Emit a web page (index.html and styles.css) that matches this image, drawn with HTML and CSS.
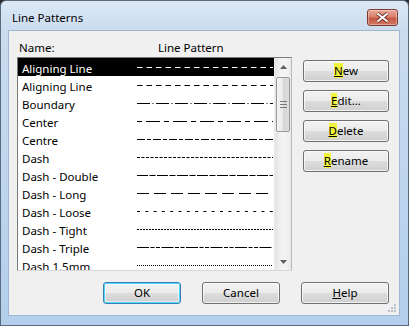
FILE: index.html
```html
<!DOCTYPE html>
<html lang="en">
<head>
  <meta charset="UTF-8">
  <title>Line Patterns</title>
  <link rel="stylesheet" href="styles.css">
</head>
<body>
  <div class="window">
    <!-- Title bar -->
    <div class="titlebar">
      <span class="title">Line Patterns</span>
      <button class="close" aria-label="Close">
        <svg width="13" height="11" viewBox="0 0 13 11">
          <path d="M1.5 1.5 L11.5 9.5 M11.5 1.5 L1.5 9.5" class="x-shadow"/>
          <path d="M1.5 1.5 L11.5 9.5 M11.5 1.5 L1.5 9.5" class="x-mark"/>
        </svg>
      </button>
    </div>

    <div class="client">
      <!-- Column headers -->
      <div class="labels">
        <span class="lbl-name">Name:</span>
        <span class="lbl-pattern">Line Pattern</span>
      </div>

      <div class="main">
        <!-- Pattern list -->
        <div class="listbox">
          <ul class="rows" id="rows"></ul>
          <div class="scrollbar">
            <div class="sb-btn">
              <svg width="7" height="4" viewBox="0 0 7 4"><path d="M0 4 L3.5 0 L7 4 Z"/></svg>
            </div>
            <div class="sb-track">
              <div class="sb-thumb"><span class="grip"></span></div>
            </div>
            <div class="sb-btn">
              <svg width="7" height="4" viewBox="0 0 7 4"><path d="M0 0 L7 0 L3.5 4 Z"/></svg>
            </div>
          </div>
        </div>

        <!-- Side buttons -->
        <div class="side">
          <button class="btn"><u class="key">N</u>ew</button>
          <button class="btn"><u class="key">E</u>dit...</button>
          <button class="btn"><u class="key">D</u>elete</button>
          <button class="btn"><u class="key">R</u>ename</button>
        </div>
      </div>

      <!-- Dialog buttons -->
      <div class="footer">
        <button class="btn btn-default">OK</button>
        <button class="btn">Cancel</button>
        <button class="btn btn-wide"><u>H</u>elp</button>
      </div>

      <svg class="size-grip" width="9" height="9" viewBox="0 0 9 9">
        <rect x="6" y="0" width="2" height="2"/>
        <rect x="3" y="3" width="2" height="2"/>
        <rect x="6" y="3" width="2" height="2"/>
        <rect x="0" y="6" width="2" height="2"/>
        <rect x="3" y="6" width="2" height="2"/>
        <rect x="6" y="6" width="2" height="2"/>
      </svg>
    </div>
  </div>

  <script>
    const patterns = [
      { name: 'Aligning Line', cls: 'p-align', selected: true },
      { name: 'Aligning Line', cls: 'p-align' },
      { name: 'Boundary', cls: 'p-boundary' },
      { name: 'Center', cls: 'p-center' },
      { name: 'Centre', cls: 'p-centre' },
      { name: 'Dash', cls: 'p-dash' },
      { name: 'Dash - Double', cls: 'p-double' },
      { name: 'Dash - Long', cls: 'p-long' },
      { name: 'Dash - Loose', cls: 'p-loose' },
      { name: 'Dash - Tight', cls: 'p-tight' },
      { name: 'Dash - Triple', cls: 'p-triple' },
      { name: 'Dash 1.5mm', cls: 'p-dot' }
    ];

    const rows = document.getElementById('rows');
    patterns.forEach(p => {
      rows.innerHTML += `
        <li class="row${p.selected ? ' selected' : ''}">
          <span class="name">${p.name}</span>
          <svg class="pat ${p.cls}" width="136" height="5"><line x1="0" y1="2.5" x2="136" y2="2.5"/></svg>
        </li>
      `;
    });
  </script>
</body>
</html>
```

FILE: styles.css
```css
* {
  box-sizing: border-box;
}

body {
  margin: 0;
  padding: 0;
  font-family: "Noto Sans", "Open Sans", sans-serif;
  font-size: 11.5px;
  color: #000;
  background: #2b2b2b;
}

.window {
  width: 409px;
  height: 326px;
  display: flex;
  flex-direction: column;
  border: 1px solid #5a6b80;
  border-radius: 6px 6px 0 0;
  padding: 0 8px 9px 7px;
  background: linear-gradient(to bottom, #dce7f4 0, #cadcef 30px, #b3cfec 100%);
}

.titlebar {
  height: 29px;
  display: flex;
  align-items: center;
  justify-content: space-between;
  padding-left: 4px;
}

.title {
  font-size: 11.5px;
  margin-top: 3px;
}

.close {
  width: 31px;
  height: 17px;
  margin-top: 4px;
  margin-right: 2px;
  padding: 0;
  border: 1px solid #7e3b32;
  border-radius: 3px;
  background: linear-gradient(to bottom, #e9a99b 0, #d9806c 45%, #c75843 55%, #cf7a63 100%);
  box-shadow: inset 0 0 0 1px rgba(255, 255, 255, 0.35);
  display: flex;
  align-items: center;
  justify-content: center;
}

.close .x-shadow {
  stroke: #6b2a20;
  stroke-width: 3.6;
  fill: none;
}

.close .x-mark {
  stroke: #fff;
  stroke-width: 2;
  fill: none;
}

.client {
  flex: 1;
  position: relative;
  background: #f0f0f0;
  border: 1px solid #9fb7d0;
}

/* Header labels */
.labels {
  height: 26px;
  padding-top: 9px;
  line-height: 15px;
  position: relative;
}

.lbl-name {
  position: absolute;
  left: 10px;
}

.lbl-pattern {
  position: absolute;
  left: 149px;
}

.main {
  display: flex;
  gap: 11px;
  padding-left: 8px;
}

/* List box */
.listbox {
  width: 275px;
  height: 214px;
  display: flex;
  border: 1px solid #7a7a7a;
  border-right-color: #b8b8b8;
  border-bottom-color: #d8d8d8;
  background: #fff;
  overflow: hidden;
}

.rows {
  list-style: none;
  margin: 0;
  padding: 0;
  width: 256px;
  overflow: hidden;
}

.row {
  height: 18px;
  display: flex;
  align-items: center;
}

.row .name {
  width: 119px;
  padding: 4px 0 0 4px;
  line-height: 14px;
  white-space: nowrap;
}

.row.selected {
  background: #000;
  color: #fff;
}

.pat {
  display: block;
}

.pat line {
  stroke: #000;
  stroke-width: 1;
}

.row.selected .pat line {
  stroke: #fff;
}

.p-align line { stroke-dasharray: 5.5 4; }
.p-boundary line { stroke-dasharray: 13 2.5 1 2.5; }
.p-center line { stroke-dasharray: 5 4 14 4; }
.p-centre line { stroke-dasharray: 8 2 4 2; }
.p-dash line { stroke-dasharray: 3 1.5; }
.p-double line { stroke-dasharray: 11 1.5 6 1.5; }
.p-long line { stroke-dasharray: 12 5; }
.p-loose line { stroke-dasharray: 3 5.3; }
.p-tight line { stroke-dasharray: 2 1; }
.p-triple line { stroke-dasharray: 12 1.5 4 1.5 4 1.5; }
.p-dot line { stroke-dasharray: 1 1; }

/* Scrollbar */
.scrollbar {
  width: 17px;
  display: flex;
  flex-direction: column;
  background: linear-gradient(to right, #e3e3e3, #f3f3f3 40%, #f3f3f3 70%, #e8e8e8);
  border-left: 1px solid #ececec;
}

.sb-btn {
  height: 17px;
  display: flex;
  align-items: center;
  justify-content: center;
}

.sb-btn svg {
  fill: #606060;
}

.sb-track {
  flex: 1;
  padding-top: 2px;
}

.sb-thumb {
  height: 55px;
  margin: 0 1px;
  border: 1px solid #9a9a9a;
  border-radius: 2px;
  background: linear-gradient(to right, #f4f4f4, #e9e9e9 50%, #d6d6d6 51%, #dcdcdc);
  display: flex;
  align-items: center;
  justify-content: center;
}

.grip {
  width: 7px;
  height: 7px;
  border-top: 1px solid #777;
  border-bottom: 1px solid #777;
  background: linear-gradient(#777, #777) center / 100% 1px no-repeat;
}

/* Buttons */
.side {
  display: flex;
  flex-direction: column;
  gap: 8px;
  padding-top: 3px;
}

.btn {
  width: 86px;
  height: 22px;
  padding: 0;
  font-family: inherit;
  font-size: 11.5px;
  line-height: 18px;
  color: #000;
  border: 1px solid #707070;
  border-radius: 3px;
  background: linear-gradient(to bottom, #f2f2f2 0, #ebebeb 50%, #dddddd 51%, #cfcfcf 100%);
  box-shadow: inset 0 0 0 1px rgba(255, 255, 255, 0.7);
}

.btn u {
  text-decoration: underline;
}

.btn .key {
  background: #f4f43c;
}

.footer {
  display: flex;
  justify-content: flex-end;
  gap: 21px;
  margin-top: 11px;
  padding-right: 10px;
}

.footer .btn {
  width: 78px;
}

.footer .btn-wide {
  width: 88px;
}

.btn-default {
  border-color: #3c7fb1;
  box-shadow: inset 0 0 0 1px #48d8fb, inset 0 0 0 2px rgba(255, 255, 255, 0.5);
}

.size-grip {
  position: absolute;
  right: 2px;
  bottom: 2px;
  fill: #b9c2cc;
}
```
